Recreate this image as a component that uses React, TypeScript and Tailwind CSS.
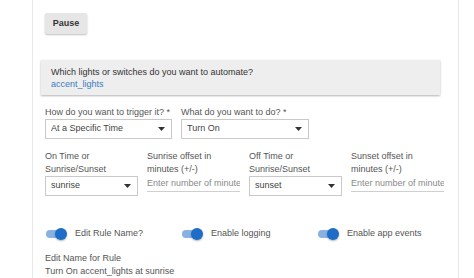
import React from "react";

const font = { fontFamily: '"Liberation Sans", Arial, sans-serif' };

function Caret() {
  return (
    <svg width="7" height="4" viewBox="0 0 7 4" className="shrink-0">
      <path d="M0 0 L7 0 L3.5 4 Z" fill="#333" />
    </svg>
  );
}

function Select({ value, w }: { value: string; w: string }) {
  return (
    <div
      className={`${w} h-[20px] border border-[#c9c9c9] bg-white flex items-center justify-between pl-[5px] pr-[6px] text-[9px] text-[#444]`}
    >
      <span>{value}</span>
      <Caret />
    </div>
  );
}

function Toggle({ label }: { label: string }) {
  return (
    <div className="w-[136px] flex items-center h-[12px]">
      <div className="relative w-[21px] h-[12px] ml-[1px]">
        <div className="absolute left-0 top-[2px] w-[18px] h-[8px] rounded-full bg-[#8ab0e2]" />
        <div className="absolute right-0 top-0 w-[12px] h-[12px] rounded-full bg-[#1e6dc9] shadow-[0_1px_2px_rgba(0,0,0,0.3)]" />
      </div>
      <span className="ml-[8px] text-[9px] text-[#555] whitespace-nowrap">{label}</span>
    </div>
  );
}

export default function App() {
  return (
    <div className="w-[474px] h-[278px] overflow-hidden bg-white" style={font}>
      <div className="ml-[32px] w-[427px] h-[278px] border-x border-[#e8e8e8] pl-[8px]">
        <div className="pt-[13px] pl-[4px]">
          <div className="w-[42px] h-[21px] rounded-[2px] bg-[#e6e6e6] shadow-[0_1px_2px_rgba(0,0,0,0.25)] flex items-center justify-center text-[9px] font-bold text-[#333]">
            Pause
          </div>
        </div>
        <div className="mt-[26px] w-[399px] h-[35px] bg-[#eeeeee] shadow-[0_1px_2px_rgba(0,0,0,0.3)] pl-[10px] pt-[6px] text-[9px] leading-[12px]">
          <div className="text-[#333]">Which lights or switches do you want to automate?</div>
          <div className="text-[#3b7cc0]">accent_lights</div>
        </div>
        <div className="pl-[4px]">
          <div className="mt-[11px] flex gap-[9px]">
            <div className="w-[127px]">
              <div className="text-[9px] leading-[13px] text-[#555] whitespace-nowrap">How do you want to trigger it? *</div>
              <Select value="At a Specific Time" w="w-[127px]" />
            </div>
            <div className="w-[127px]">
              <div className="text-[9px] leading-[13px] text-[#555] whitespace-nowrap">What do you want to do? *</div>
              <Select value="Turn On" w="w-[128px]" />
            </div>
          </div>
          <div className="mt-[11px] flex gap-[9px]">
            <div className="w-[93px]">
              <div className="text-[9px] leading-[13px] text-[#555]">
                On Time or
                <br />
                Sunrise/Sunset
              </div>
              <Select value="sunrise" w="w-[93px]" />
            </div>
            <div className="w-[93px]">
              <div className="text-[9px] leading-[13px] text-[#555]">
                Sunrise offset in
                <br />
                minutes (+/-)
              </div>
              <div className="h-[16px] border-b border-[#cfcfcf] text-[9px] text-[#8a8a8a] overflow-hidden whitespace-nowrap leading-[15px]">
                Enter number of minutes
              </div>
            </div>
            <div className="w-[93px]">
              <div className="text-[9px] leading-[13px] text-[#555]">
                Off Time or
                <br />
                Sunrise/Sunset
              </div>
              <Select value="sunset" w="w-[93px]" />
            </div>
            <div className="w-[93px]">
              <div className="text-[9px] leading-[13px] text-[#555]">
                Sunset offset in
                <br />
                minutes (+/-)
              </div>
              <div className="h-[16px] border-b border-[#cfcfcf] text-[9px] text-[#8a8a8a] overflow-hidden whitespace-nowrap leading-[15px]">
                Enter number of minutes
              </div>
            </div>
          </div>
          <div className="mt-[32px] flex">
            <Toggle label="Edit Rule Name?" />
            <Toggle label="Enable logging" />
            <Toggle label="Enable app events" />
          </div>
          <div className="mt-[12px] text-[9px] leading-[13px] text-[#555]">
            <div>Edit Name for Rule</div>
            <div>Turn On accent_lights at sunrise</div>
          </div>
        </div>
      </div>
    </div>
  );
}
